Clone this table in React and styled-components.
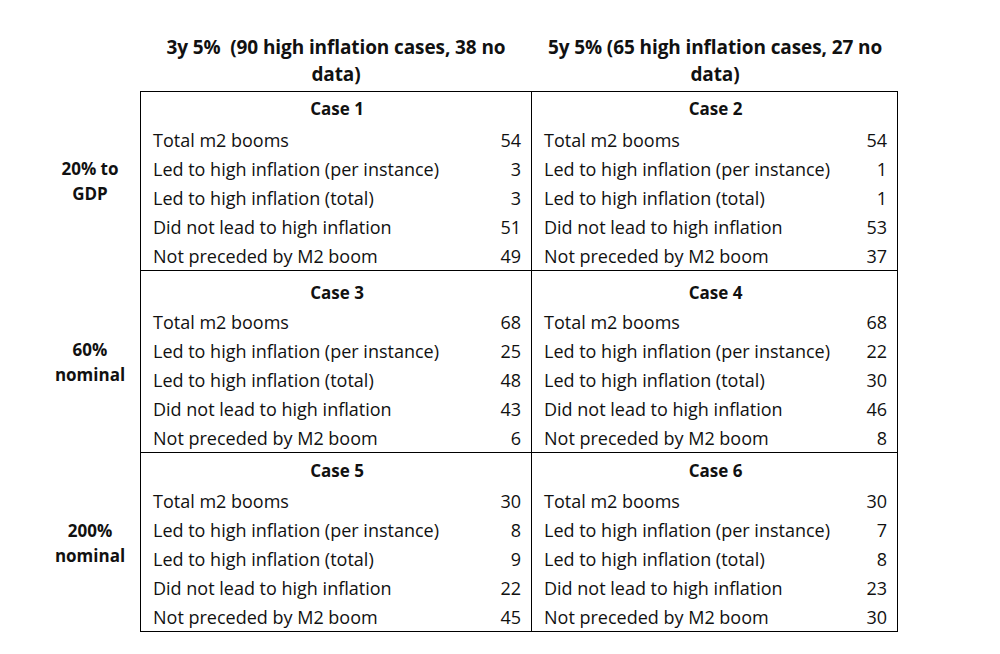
import React from 'react';
import styled, { createGlobalStyle } from 'styled-components';

const GlobalStyle = createGlobalStyle`
  html, body {
    margin: 0;
    padding: 0;
    background: #fff;
  }
  body {
    font-family: "Open Sans", "Liberation Sans", sans-serif;
    color: #111;
  }
`

const Page = styled.div`
  width: 1000px;
  height: 654px;
  padding: 34px 0 0 40px;
  box-sizing: border-box;
`

const Grid = styled.div`
  display: grid;
  grid-template-columns: 100px 392px 366px;
  grid-template-rows: 57px auto auto auto;
`

const ColHead = styled.div`
  font-weight: bold;
  font-size: 19px;
  line-height: 27px;
  text-align: center;
  padding: 0 10px;
  letter-spacing: -0.1px;
`

const RowHead = styled.div`
  display: flex;
  align-items: center;
  justify-content: center;
  text-align: center;
  font-weight: bold;
  font-size: 17px;
  line-height: 25px;
`

const CaseCell = styled.div`
  border-right: 1px solid #000;
  border-bottom: 1px solid #000;
  border-left: ${p => (p.$first ? '1px solid #000' : 'none')};
  border-top: ${p => (p.$top ? '1px solid #000' : 'none')};
  padding: 0 10px 0 12px;
  display: flex;
  flex-direction: column;
`

const CaseTitle = styled.div`
  box-sizing: border-box;
  height: ${p => p.$height}px;
  padding-top: ${p => p.$offset - 12}px;
  line-height: 24px;
  text-align: center;
  font-weight: bold;
  font-size: 17px;
`

const Row = styled.div`
  display: flex;
  justify-content: space-between;
  align-items: center;
  height: 29px;
  font-size: 18px;
`

const blocks = [
  {
    label: ['20% to', 'GDP'],
    title: { height: 33, offset: 17 },
    cases: [
      { name: 'Case 1', values: [54, 3, 3, 51, 49] },
      { name: 'Case 2', values: [54, 1, 1, 53, 37] },
    ],
  },
  {
    label: ['60%', 'nominal'],
    title: { height: 36, offset: 22 },
    cases: [
      { name: 'Case 3', values: [68, 25, 48, 43, 6] },
      { name: 'Case 4', values: [68, 22, 30, 46, 8] },
    ],
  },
  {
    label: ['200%', 'nominal'],
    title: { height: 33, offset: 18 },
    cases: [
      { name: 'Case 5', values: [30, 8, 9, 22, 45] },
      { name: 'Case 6', values: [30, 7, 8, 23, 30] },
    ],
  },
]

const rowLabels = [
  'Total m2 booms',
  'Led to high inflation (per instance)',
  'Led to high inflation (total)',
  'Did not lead to high inflation',
  'Not preceded by M2 boom',
]

const App = () => {
  return (
    <Page>
      <GlobalStyle />
      <Grid>
        <div />
        <ColHead>3y 5%&nbsp; (90 high inflation cases, 38 no data)</ColHead>
        <ColHead>5y 5% (65 high inflation cases, 27 no data)</ColHead>
        {blocks.map((block, bi) => (
          <React.Fragment key={bi}>
            <RowHead>
              {block.label[0]}
              <br />
              {block.label[1]}
            </RowHead>
            {block.cases.map((c, ci) => (
              <CaseCell key={c.name} $first={ci === 0} $top={bi === 0}>
                <CaseTitle $height={block.title.height} $offset={block.title.offset}>
                  {c.name}
                </CaseTitle>
                {rowLabels.map((label, ri) => (
                  <Row key={label}>
                    <span>{label}</span>
                    <span>{c.values[ri]}</span>
                  </Row>
                ))}
              </CaseCell>
            ))}
          </React.Fragment>
        ))}
      </Grid>
    </Page>
  )
}

export default App;
